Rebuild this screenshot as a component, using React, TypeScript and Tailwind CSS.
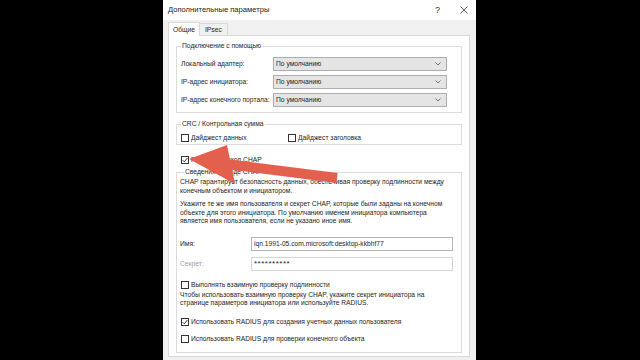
import React from "react";

function Check({ checked }: { checked?: boolean }) {
  return (
    <span className="w-[8px] h-[8px] border border-[#333333] bg-white flex items-center justify-center shrink-0">
      {checked && (
        <svg width="6" height="6" viewBox="0 0 6 6">
          <path d="M0.6 3.1 L2.3 4.8 L5.4 1" fill="none" stroke="#222" strokeWidth="0.9" />
        </svg>
      )}
    </span>
  );
}

function CheckRow({ checked, label }: { checked?: boolean; label: string }) {
  return (
    <div className="flex items-center gap-[2px] h-[9px] whitespace-nowrap">
      <Check checked={checked} />
      <span>{label}</span>
    </div>
  );
}

function Select({ label }: { label: string }) {
  return (
    <div className="flex items-center h-[14px]">
      <span className="w-[92px] shrink-0 whitespace-nowrap">{label}</span>
      <div className="w-[174px] h-[14px] border border-[#adadad] bg-[#e5e5e5] flex items-center justify-between pl-[2px] pr-[5px]">
        <span>По умолчанию</span>
        <svg width="6" height="4" viewBox="0 0 6 4">
          <path d="M0.5 0.5 L3 3 L5.5 0.5" fill="none" stroke="#555" strokeWidth="0.8" />
        </svg>
      </div>
    </div>
  );
}

export default function App() {
  return (
    <div className="w-[640px] h-[360px] bg-black relative overflow-hidden font-['Liberation_Sans',Arial,sans-serif] text-[6.7px] leading-[8px] text-[#1e1e1e]">
      <div className="ml-[163px] w-[313px] h-[360px] bg-[#f0f0f0] flex flex-col">
        {/* title bar */}
        <div className="h-[20px] bg-white flex items-center pl-[5px] pr-[8px] text-[7.6px]">
          <span className="text-[#222]">Дополнительные параметры</span>
          <span className="ml-auto text-[9px] text-[#333]">?</span>
          <svg className="ml-[20px]" width="8" height="8" viewBox="0 0 8 8">
            <path d="M0.5 0.5 L7.5 7.5 M7.5 0.5 L0.5 7.5" stroke="#333" strokeWidth="0.8" />
          </svg>
        </div>

        {/* tabs */}
        <div className="flex items-end h-[15px] pl-[5px] pt-[2px]">
          <div className="h-[14px] px-[4px] bg-white border border-b-0 border-[#d9d9d9] flex items-center relative z-10 mb-[-1px]">
            Общие
          </div>
          <div className="h-[12px] px-[5px] border border-l-0 border-b-0 border-[#d9d9d9] flex items-center">IPsec</div>
        </div>

        {/* panel */}
        <div className="ml-[5px] w-[302px] h-[322px] bg-white border border-[#d9d9d9] pl-[7px] pr-[7px] pt-[6px]">
          <fieldset className="border border-[#dcdcdc] px-[4px] pb-[5px]">
            <legend className="px-[1px]">Подключение с помощью</legend>
            <div className="flex flex-col gap-[4px] mt-[7px]">
              <Select label="Локальный адаптер:" />
              <Select label="IP-адрес инициатора:" />
              <Select label="IP-адрес конечного портала:" />
            </div>
          </fieldset>

          <fieldset className="border border-[#dcdcdc] px-[4px] pb-[2px] mt-[7px]">
            <legend className="px-[1px]">CRC / Контрольная сумма</legend>
            <div className="flex items-center mt-[5px]">
              <div className="w-[107px]">
                <CheckRow label="Дайджест данных" />
              </div>
              <CheckRow label="Дайджест заголовка" />
            </div>
          </fieldset>

          <div className="mt-[10px] pl-[5px]">
            <CheckRow checked label="Разрешить вход CHAP" />
          </div>

          <fieldset className="border border-[#dcdcdc] px-[3px] pb-[8px] mt-[4px]">
            <legend className="ml-[4px] px-[1px]">Сведения о входе CHAP</legend>
            <p className="leading-[8.5px] mt-[2px]">
              CHAP гарантирует безопасность данных, обеспечивая проверку подлинности между
              <br />
              конечным объектом и инициатором.
            </p>
            <p className="leading-[8.5px] mt-[5px]">
              Укажите те же имя пользователя и секрет CHAP, которые были заданы на конечном
              <br />
              объекте для этого инициатора. По умолчанию именем инициатора компьютера
              <br />
              является имя пользователя, если не указано иное имя.
            </p>
            <div className="flex items-center mt-[11px]">
              <span className="w-[71px]">Имя:</span>
              <div className="w-[202px] h-[14px] border border-[#b5b5b5] flex items-center pl-[2px]">
                iqn.1991-05.com.microsoft:desktop-kkbhf77
              </div>
            </div>
            <div className="flex items-center mt-[6px]">
              <span className="w-[71px] text-[#a0a0a0]">Секрет:</span>
              <div className="w-[202px] h-[14px] border border-[#d5d5d5] flex items-center pl-[2px] text-[8px] tracking-[0.5px]">
                **********
              </div>
            </div>
            <div className="mt-[10px] pl-[1px]">
              <CheckRow label="Выполнять взаимную проверку подлинности" />
            </div>
            <p className="leading-[8.5px] mt-[1px]">
              Чтобы использовать взаимную проверку CHAP, укажите секрет инициатора на
              <br />
              странице параметров инициатора или используйте RADIUS.
            </p>
            <div className="mt-[10px] pl-[1px]">
              <CheckRow checked label="Использовать RADIUS для создания учетных данных пользователя" />
            </div>
            <div className="mt-[8px] pl-[1px]">
              <CheckRow label="Использовать RADIUS для проверки конечного объекта" />
            </div>
          </fieldset>
        </div>
      </div>

      {/* red annotation arrow */}
      <svg className="absolute left-0 top-0 pointer-events-none" width="640" height="360" viewBox="0 0 640 360">
        <line x1="337" y1="178" x2="226" y2="164" stroke="#e4604e" strokeWidth="10" strokeLinecap="butt" />
        <polygon points="189,159 227,145 235,184" fill="#e4604e" />
      </svg>
    </div>
  );
}
